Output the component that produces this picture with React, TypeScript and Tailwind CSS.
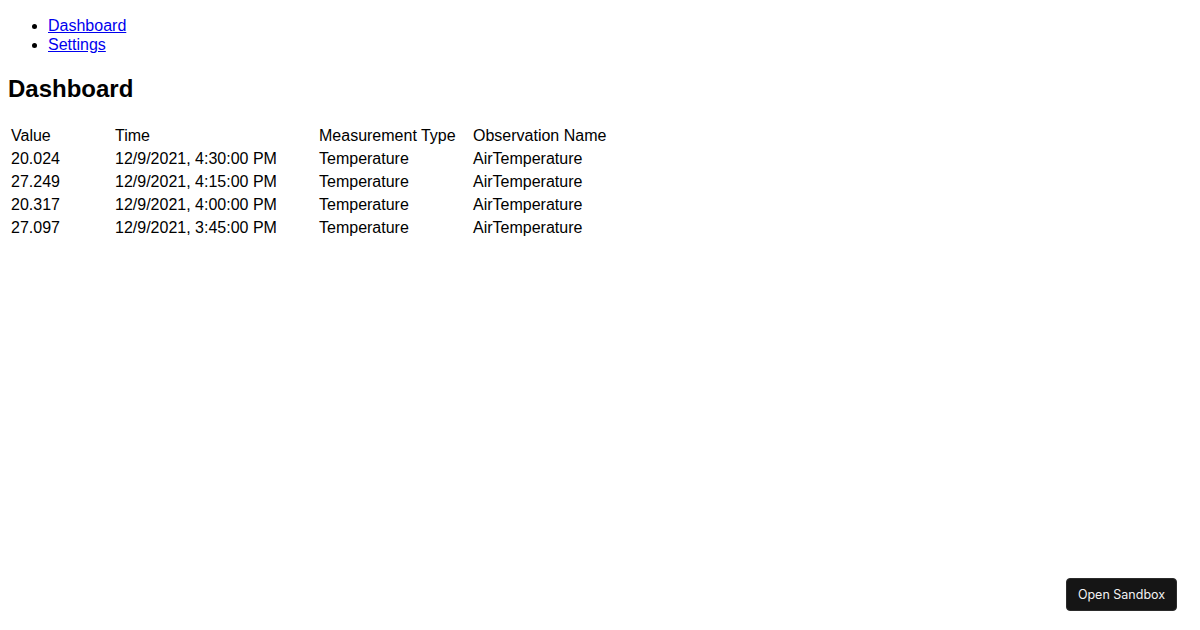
import React from 'react';

interface Reading {
  value: string;
  time: string;
  type: string;
  name: string;
}

const readings: Reading[] = [
  { value: '20.024', time: '12/9/2021, 4:30:00 PM', type: 'Temperature', name: 'AirTemperature' },
  { value: '27.249', time: '12/9/2021, 4:15:00 PM', type: 'Temperature', name: 'AirTemperature' },
  { value: '20.317', time: '12/9/2021, 4:00:00 PM', type: 'Temperature', name: 'AirTemperature' },
  { value: '27.097', time: '12/9/2021, 3:45:00 PM', type: 'Temperature', name: 'AirTemperature' },
];

const App = () => {
  return (
    <div className="min-h-screen bg-white px-2 pb-2 text-black text-base leading-[19px] font-['Liberation_Sans',Arial,sans-serif]">
      {/* Nav */}
      <ul className="my-4 list-disc pl-10">
        <li>
          <a href="#" className="text-[#0000ee] underline">Dashboard</a>
        </li>
        <li>
          <a href="#" className="text-[#0000ee] underline">Settings</a>
        </li>
      </ul>

      <h2 className="mt-[21px] mb-5 text-2xl font-bold leading-[28px]">Dashboard</h2>

      {/* Readings */}
      <table className="border-separate border-spacing-[2px]">
        <tbody>
          <tr>
            <td className="w-[102px] p-px">Value</td>
            <td className="w-[202px] p-px">Time</td>
            <td className="w-[152px] p-px">Measurement Type</td>
            <td className="p-px">Observation Name</td>
          </tr>
          {readings.map((r) => (
            <tr key={r.time}>
              <td className="p-px">{r.value}</td>
              <td className="p-px">{r.time}</td>
              <td className="p-px">{r.type}</td>
              <td className="p-px">{r.name}</td>
            </tr>
          ))}
        </tbody>
      </table>

      <button className="fixed bottom-[19px] right-[23px] flex h-[33px] w-[111px] items-center justify-center rounded-[4px] border border-[#2b2b2b] bg-[#151515] text-[12.5px] text-[#f2f2f2] font-['Inter',sans-serif]">
        Open Sandbox
      </button>
    </div>
  );
};

export default App;
